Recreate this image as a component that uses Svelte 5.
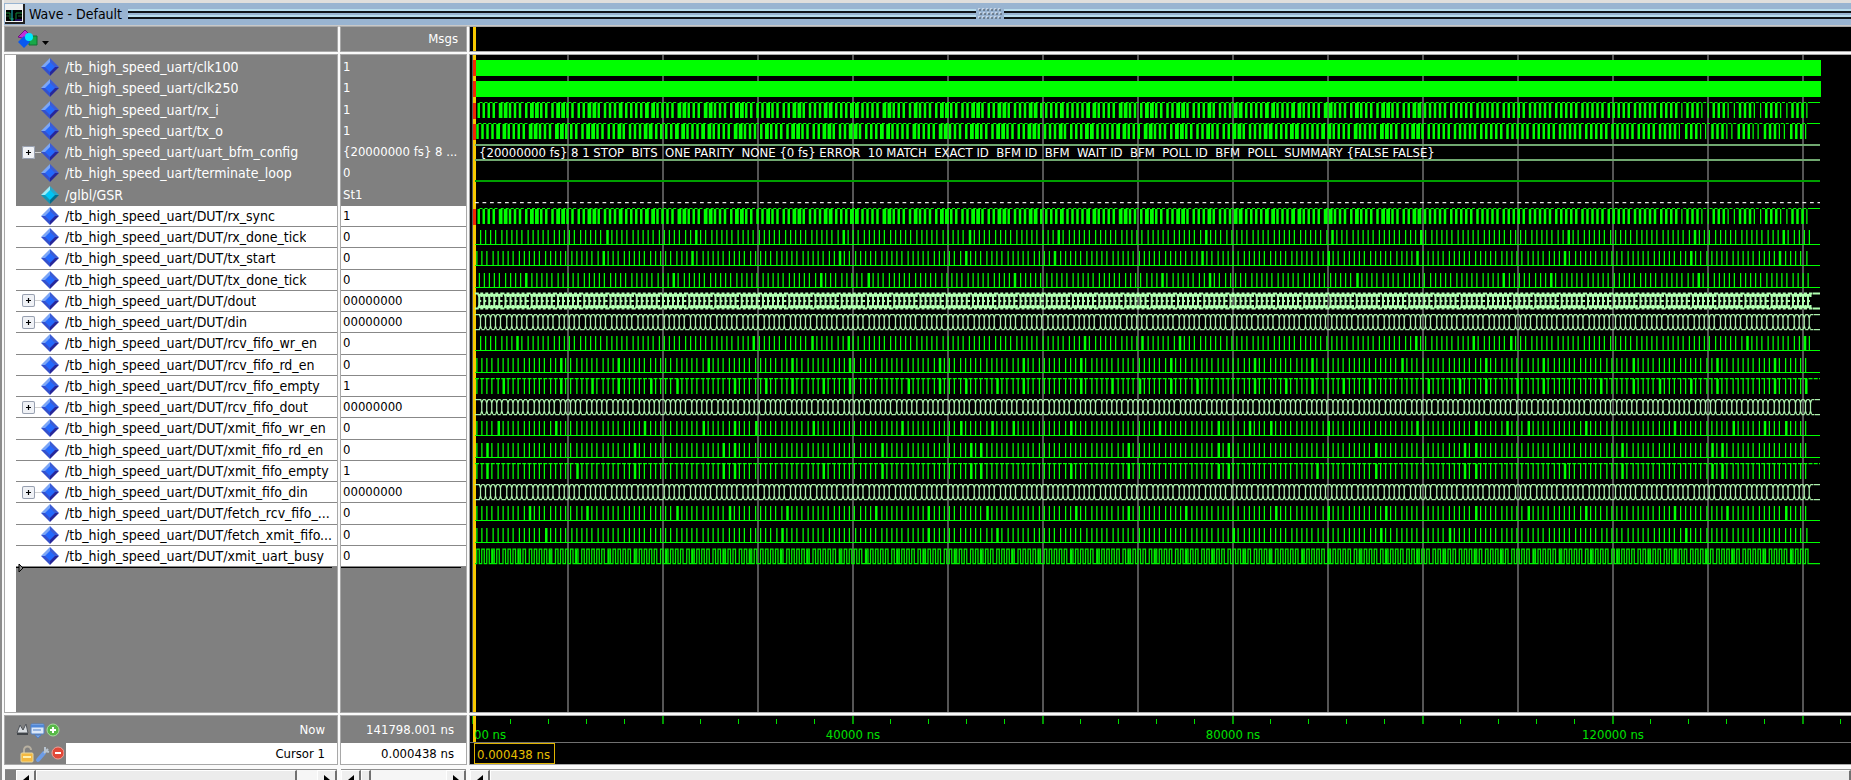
<script lang="ts">
  type Kind = "clock" | "serial" | "record" | "low" | "dashed" | "pulse" | "inverted" | "bus" | "dense" | "busy";

  interface Signal {
    name: string;
    value: string;
    kind: Kind;
    selected?: boolean;
    expandable?: boolean;
    net?: boolean;
    start?: number;
    wide?: number[];
  }

  const tb = "/tb_high_speed_uart/";
  const dut = tb + "DUT/";

  // wide: steps between the pulses that are drawn two units wide
  const signals: Signal[] = [
    { name: tb + "clk100", value: "1", kind: "clock", selected: true },
    { name: tb + "clk250", value: "1", kind: "clock", selected: true },
    { name: tb + "rx_i", value: "1", kind: "serial", selected: true, start: 6.3 },
    { name: tb + "tx_o", value: "1", kind: "serial", selected: true, start: 5.1 },
    { name: tb + "uart_bfm_config", value: "{20000000 fs} 8 ...", kind: "record", selected: true, expandable: true },
    { name: tb + "terminate_loop", value: "0", kind: "low", selected: true },
    { name: "/glbl/GSR", value: "St1", kind: "dashed", selected: true, net: true },
    { name: dut + "rx_sync", value: "1", kind: "serial", start: 6.3 },
    { name: dut + "rx_done_tick", value: "0", kind: "pulse", start: 8.2, wide: [24, 17, 28] },
    { name: dut + "tx_start", value: "0", kind: "pulse", start: 5.4, wide: [24, 17, 28] },
    { name: dut + "tx_done_tick", value: "0", kind: "pulse", start: 7.1, wide: [9, 28, 28] },
    { name: dut + "dout", value: "00000000", kind: "dense", expandable: true, start: 7 },
    { name: dut + "din", value: "00000000", kind: "bus", expandable: true, start: 8 },
    { name: dut + "rcv_fifo_wr_en", value: "0", kind: "pulse", start: 8.2, wide: [7, 45, 11] },
    { name: dut + "rcv_fifo_rd_en", value: "0", kind: "pulse", start: 5.3, wide: [16, 11, 17] },
    { name: dut + "rcv_fifo_empty", value: "1", kind: "inverted", start: 5.3, wide: [5, 11, 6, 5, 6] },
    { name: dut + "rcv_fifo_dout", value: "00000000", kind: "bus", expandable: true, start: 9 },
    { name: dut + "xmit_fifo_wr_en", value: "0", kind: "pulse", start: 5.3, wide: [4, 11, 17, 11, 6] },
    { name: dut + "xmit_fifo_rd_en", value: "0", kind: "pulse", start: 5.3, wide: [2, 28, 17] },
    { name: dut + "xmit_fifo_empty", value: "1", kind: "inverted", start: 5.3, wide: [2, 17, 11, 17] },
    { name: dut + "xmit_fifo_din", value: "00000000", kind: "bus", expandable: true, start: 8 },
    { name: dut + "fetch_rcv_fifo_...", value: "0", kind: "pulse", start: 5.3, wide: [10, 11, 17] },
    { name: dut + "fetch_xmit_fifo...", value: "0", kind: "pulse", start: 5.4, wide: [13, 45, 28] },
    { name: dut + "xmit_uart_busy", value: "0", kind: "busy", start: 5 },
  ];

  const record =
    "{20000000 fs} 8 1 STOP  BITS  ONE PARITY  NONE {0 fs} ERROR  10 MATCH  EXACT ID  BFM ID  BFM  WAIT ID  BFM  POLL ID  BFM  POLL  SUMMARY {FALSE FALSE}";

  const unit = 1.25;
  const period = 4.204;
  const count = 254;
  const origin = 5;
  const end = 1350;

  const labels = [40000, 80000, 120000].map((time) => ({ time, x: 3 + (time / 40000) * 380 }));
  const ticks = Array.from({ length: 50 }, (_, k) => ({ x: 2 + k * 38, major: k % 5 === 0 }));

  const px = (units: number) => Math.floor(units) * unit;

  function wideSet(gaps: number[] = []) {
    const set = new Set<number>();
    for (let k = gaps[0], i = 0; k < count; i++, k += gaps[i % gaps.length]) set.add(k);
    return set;
  }

  function box(x: number, y: number, w: number, h: number) {
    return `M${x} ${y}h${w}v${h}h${-w}z`;
  }

  function bars(s: Signal) {
    const wide = wideSet(s.wide);
    let d = "";
    for (let k = 0; k < count; k++) {
      const x = px(s.start! + k * period);
      if (s.kind === "serial") {
        const phase = (k / 5.6) % 1;
        let w = phase > 0.65 && k < 180 ? 3 : 2;
        if (k > 228 && k % 5 > 2) w = 1;
        d += box(x, 3, w * unit, 15) + box(x + 2, 2, 3, 1);
      } else {
        d += box(x, 3, (wide.has(k) ? 2 : 1) * unit, 15);
      }
    }
    if (s.kind === "serial") d += box(1338, 2, end - 1338, 1);
    if (s.kind === "pulse") d += box(origin, 17, end - origin, 1);
    return d;
  }

  function bus(s: Signal) {
    let d = `M${origin} 2.5H${s.start! * unit}M${origin} 17.5H${s.start! * unit}`;
    for (let k = 0; k < count; k++) {
      const x = px(s.start! + k * period) + 0.5;
      const n = px(s.start! + (k + 1) * period) + 0.5;
      d += `M${x - 1} 3L${x} 6V14L${x - 1} 17M${x + 1} 3L${x} 6M${x} 14L${x + 1} 17`;
      d += `M${x + 1} 2.5H${n - 1}M${x + 1} 17.5H${n - 1}`;
      if (s.kind === "dense") {
        const m = x + 2.5;
        d += `M${m} 3V6M${m} 14V17M${x} 10H${n - 3}`;
      }
    }
    const last = px(s.start! + count * period);
    return d + `M${last} 2.5H${end}M${last} 17.5H${end}`;
  }

  function busy(s: Signal) {
    let d = `M${origin} 17.5`;
    for (let k = 0; k < count; k++) {
      const x = px(s.start! + k * period) + 0.5;
      d += `H${x}V3H${x + 2.5}V17.5`;
      if (k % 11 === 3 || k % 11 === 8) d += `M${x + 1} 4V17.5`;
    }
    return d + `H${end}`;
  }
</script>

{#snippet diamond(net: boolean)}
  <svg class="diamond" viewBox="0 0 18 18">
    <path d="M9 0L0 9H9z" fill={net ? "#9cecf8" : "#7ca6f6"} />
    <path d="M9 0L18 9H9z" fill={net ? "#2aa6c8" : "#3c5cd4"} />
    <path d="M0 9L9 18V9z" fill={net ? "#1295b4" : "#3450cc"} />
    <path d="M18 9L9 18V9z" fill={net ? "#046c8c" : "#26269a"} />
    <path d="M9 4L14 9L9 14L4 9z" fill={net ? "#00c4f4" : "#2468fc"} />
  </svg>
{/snippet}

{#snippet arrow(left: boolean)}
  <button class="step" aria-label={left ? "Scroll left" : "Scroll right"}>
    <svg viewBox="0 0 6 10"><path d={left ? "M6 0V10L0 5z" : "M0 0V10L6 5z"} /></svg>
  </button>
{/snippet}

<div class="window">
  <header class="title">
    <svg class="app-icon" viewBox="0 0 20 20">
      <rect width="20" height="20" fill="#202020" />
      <rect width="18" height="18" fill="#f2f2f2" />
      <rect x="1" y="6" width="16" height="11" fill="#000" />
      <path d="M1 9h4v6h4M11 15v-6h6" fill="none" stroke="#108838" />
      <path d="M1 12h3M13 12h4" stroke="#1c5c30" />
      <path d="M7 6v11" stroke="#20c4d0" />
      <path d="M10 16h7" stroke="#4020b0" />
    </svg>
    <h1>Wave - Default</h1>
    <span class="groove"></span>
    <svg class="grip" viewBox="0 0 24 12">
      {#each [0, 1, 2, 3, 4, 5] as i}
        <path d="M{i * 4} 1h2M{i * 4 + 1} 5h2M{i * 4} 9h2" stroke="#eef4fa" stroke-width="1" />
        <path d="M{i * 4 + 1} 2h2M{i * 4 + 2} 6h2M{i * 4 + 1} 10h2" stroke="#3c444c" stroke-width="1" />
      {/each}
    </svg>
    <span class="groove"></span>
  </header>

  <main>
    <div class="head filter">
      <button class="menu" aria-label="Object filter">
        <svg viewBox="0 0 34 20">
          <path d="M1 8L8 1L13 6L9 10z" fill="#c030d8" stroke="#701080" />
          <path d="M12 7H20V16H12z" fill="#18a848" stroke="#107030" />
          <path d="M7 7L13 13L7 19L1 13z" fill="#0858f0" />
          <circle cx="12" cy="8" r="4" fill="#00e8ff" />
          <path d="M25 12H32L28.500 16z" fill="#000" />
        </svg>
      </button>
    </div>
    <div class="head msgs">Msgs</div>
    <div class="head black"><span class="cursor"></span></div>

    <div class="pane names">
      <ul class="rows">
        {#each signals as s}
          <li class:selected={s.selected}>
            <span class="tree">
              {#if s.expandable}
                <button class="expand" aria-label="Expand {s.name}">
                  <svg viewBox="0 0 13 13"><path d="M4 6.500H9M6.500 4V9" stroke="#000" stroke-width="1.200" /></svg>
                </button>
              {/if}
            </span>
            {@render diamond(!!s.net)}
            <span class="name">{s.name}</span>
          </li>
        {/each}
      </ul>
      <div class="insert">
        <svg viewBox="0 0 6 10"><path d="M1 1V9L5 5z" fill="#888" stroke="#000" /></svg>
      </div>
    </div>

    <div class="pane values">
      <ul class="rows">
        {#each signals as s}
          <li class:selected={s.selected}><span class="name">{s.value}</span></li>
        {/each}
      </ul>
      <div class="insert"></div>
    </div>

    <div class="pane waves">
      <span class="cursor"></span>
      <ul class="rows">
        {#each signals as s}
          <li>
            <svg class="trace">
              {#if s.kind === "clock"}
                <rect x="6" y="3" width="1345" height="16" fill="#0f0" />
              {:else if s.kind === "serial" || s.kind === "pulse"}
                <path d={bars(s)} fill="#0f0" />
              {:else if s.kind === "inverted"}
                <path d={bars(s)} fill="#0f0" />
                <path d="M{origin} 2.500H{end}" stroke="#0f0" stroke-width="1.250" stroke-dasharray="4 1.250" />
              {:else if s.kind === "low"}
                <path d="M{origin} 18H{end}" stroke="#00a000" stroke-width="2" />
              {:else if s.kind === "dashed"}
                <path d="M{origin} 17.500H{end}" stroke="#e8e8e8" stroke-width="1.250" stroke-dasharray="3.750 3.750" />
              {:else if s.kind === "record"}
                <path d="M{origin} 3H{end}M{origin} 18H{end}" stroke="#70a870" stroke-width="2" />
              {:else if s.kind === "bus"}
                <path d={bus(s)} stroke="#acf0ac" stroke-width="1.250" fill="none" />
              {:else if s.kind === "dense"}
                <path d={bus(s)} stroke="#b0ffb0" stroke-width="2" fill="none" />
              {:else}
                <path d={busy(s)} stroke="#00f000" stroke-width="1.250" fill="none" />
              {/if}
              {#if s.kind === "clock" || s.kind === "serial"}
                <rect x="3" y="3" width="3" height="16" fill="#f02800" />
              {/if}
            </svg>
            {#if s.kind === "record"}
              <span class="record">{record}</span>
            {/if}
          </li>
        {/each}
      </ul>
    </div>

    <div class="foot tools">
      <div class="line">
        <svg viewBox="0 0 44 16">
          <path d="M1 11L4 3L7 8L10 2L12 11z" fill="#d8dce0" stroke="#50545a" />
          <rect x="1" y="11" width="11" height="2" fill="#404448" />
          <rect x="15" y="2" width="13" height="10" rx="1" fill="#dce8f8" stroke="#5080c8" />
          <path d="M15 4h13" stroke="#5088d8" stroke-width="3" />
          <path d="M17 8h8M19 13l3 3l3-3z" stroke="#5080c8" fill="#80a8e0" />
          <circle cx="37" cy="8" r="6" fill="#58b848" stroke="#a8dca0" />
          <path d="M34 8h6M37 5v6" stroke="#fff" stroke-width="2" />
        </svg>
        <span>Now</span>
      </div>
      <div class="line light">
        <span class="icons">
          <svg viewBox="0 0 46 18">
            <path d="M6 9V5a3.500 3.500 0 0 1 7 0" fill="none" stroke="#b8b0a0" stroke-width="2" />
            <rect x="3" y="8" width="12" height="9" rx="1" fill="#f4b840" stroke="#e8d8a0" />
            <path d="M5 12h8" stroke="#fff0b0" stroke-width="2" />
            <path d="M20 15L26 8" stroke="#6c9ce8" stroke-width="4" stroke-linecap="round" />
            <path d="M26 8L30 4M27 2v4l4 1" stroke="#b8c4d0" stroke-width="2" fill="none" />
            <circle cx="40" cy="8" r="6" fill="#e04838" stroke="#f0a098" />
            <path d="M37 8h6" stroke="#fff" stroke-width="2" />
          </svg>
        </span>
        <span>Cursor 1</span>
      </div>
    </div>
    <div class="foot times">
      <div class="line">141798.001 ns</div>
      <div class="line light">0.000438 ns</div>
    </div>
    <div class="foot timeline">
      <div class="scale">
        <svg class="ticks">
          {#each ticks as t}
            <rect x={t.x} y={t.major ? 0 : 3} width={t.major ? 2 : 1} height={t.major ? 8 : 5} fill={t.major ? "#009a00" : "#00e000"} />
          {/each}
        </svg>
        <span class="cursor"></span>
        <span class="first">00 ns</span>
        {#each labels as l}
          <span class="label" style="left: {l.x}px">{l.time} ns</span>
        {/each}
      </div>
      <div class="cursor-row"><output>0.000438 ns</output></div>
    </div>

    <div class="scroll indent">
      {@render arrow(true)}
      <span class="thumb long"></span>
      <span class="track"></span>
      {@render arrow(false)}
    </div>
    <div class="scroll">
      {@render arrow(true)}
      <span class="thumb small"></span>
      <span class="track"></span>
      {@render arrow(false)}
    </div>
    <div class="scroll">
      {@render arrow(true)}
      <span class="thumb full"></span>
    </div>
  </main>
</div>

<style>
  :global(body) {
    margin: 0;
    background: #f0f0f0;
  }
  .window {
    display: flex;
    flex-direction: column;
    box-sizing: border-box;
    height: 100vh;
    min-height: 700px;
    overflow: hidden;
    border-left: 2px solid #8c8c8c;
    background: #f0f0f0;
    font: 13px/16px "DejaVu Sans Condensed", "Noto Sans", sans-serif;
    color: #000;
  }
  .title {
    display: flex;
    align-items: center;
    flex: none;
    box-sizing: border-box;
    height: 27px;
    margin-left: 2px;
    padding-left: 1px;
    border-top: 3px solid #e0dedc;
    border-bottom: 2px solid #c8c8c8;
    background: #99b4d1;
  }
  .app-icon {
    width: 20px;
    height: 20px;
  }
  h1 {
    margin: 0 6px 0 4px;
    font-size: 14px;
    font-weight: normal;
    white-space: nowrap;
  }
  .groove {
    flex: 1;
    height: 10px;
    background: linear-gradient(
      #b8dcec 0 2px, #101418 2px 4px, #99b4d1 4px 6px, #b8dcec 6px 8px, #101418 8px 10px
    );
  }
  .grip {
    width: 24px;
    height: 12px;
    margin: 0 2px;
  }
  main {
    display: grid;
    grid-template-columns: 332px 125px minmax(0, 1fr);
    grid-template-rows: 24px minmax(0, 1fr) 48px 12px;
    gap: 4px;
    flex: 1;
    min-height: 0;
    padding-left: 3px;
    background: #fafafa;
  }
  ul {
    margin: 0;
    padding: 0;
    list-style: none;
  }
  button {
    padding: 0;
    border: 0;
    background: none;
  }
  .head,
  .foot,
  .pane {
    position: relative;
    box-shadow: 0 0 0 1px #a8a8a8;
    background: #808080;
  }
  .head {
    display: flex;
    align-items: center;
  }
  .menu {
    width: 34px;
    height: 20px;
    margin-left: 12px;
  }
  .menu svg,
  .diamond,
  .expand svg {
    display: block;
  }
  .msgs {
    justify-content: flex-end;
    padding-right: 8px;
    color: #fff;
  }
  .head.black,
  .timeline {
    background: #000;
  }
  .cursor {
    position: absolute;
    top: 0;
    bottom: 0;
    left: 3px;
    width: 3px;
    background: #f8c800;
  }
  .pane {
    padding-top: 2px;
    overflow: hidden;
  }
  .names {
    border-left: 11px solid #fff;
    font-size: 14px;
  }
  .rows {
    display: grid;
    grid-template-rows: repeat(24, 1fr);
    height: 510px;
  }
  .names li,
  .values li {
    display: flex;
    align-items: center;
    min-width: 0;
    min-height: 0;
    box-sizing: border-box;
    border-bottom: 1px solid #888;
    background: #fff;
  }
  .names li.selected,
  .values li.selected {
    border-color: #808080;
    background: #808080;
    color: #fff;
  }
  .values li {
    padding-left: 2px;
  }
  .name {
    overflow: hidden;
    text-overflow: ellipsis;
    white-space: nowrap;
  }
  .names .name {
    margin-left: 6px;
  }
  .tree {
    display: flex;
    align-items: center;
    flex: none;
    width: 25px;
  }
  .tree:has(.expand)::after {
    content: "";
    flex: 1;
    height: 1px;
    background: #d0d0d0;
  }
  .expand {
    width: 13px;
    height: 13px;
    margin-left: 6px;
    border-radius: 2px;
    background: #f0f2f6;
    box-shadow: 0 0 0 1px #98a0b0 inset;
  }
  .diamond {
    flex: none;
    width: 18px;
    height: 18px;
  }
  .insert {
    display: flex;
    align-items: center;
    height: 1px;
    margin-right: 5px;
    background: #000;
  }
  .insert svg {
    width: 6px;
    height: 10px;
    margin-left: 2px;
  }
  .waves {
    background: repeating-linear-gradient(90deg, #555 0 2px, #000 2px 95px) 2px 0 #000;
  }
  .waves li {
    display: grid;
    align-items: start;
    position: relative;
    min-width: 0;
    min-height: 0;
  }
  .trace {
    width: 100%;
    height: 20px;
    grid-area: 1 / 1;
    overflow: hidden;
  }
  .record {
    grid-area: 1 / 1;
    padding: 3px 0 0 9px;
    color: #fff;
    white-space: pre;
  }
  .line {
    display: flex;
    align-items: center;
    justify-content: space-between;
    height: 27px;
    padding-right: 12px;
    color: #fff;
  }
  .line.light {
    height: 21px;
    background: #fff;
    color: #000;
  }
  .times .line {
    justify-content: flex-end;
  }
  .tools svg {
    width: 44px;
    height: 16px;
    margin-left: 11px;
  }
  .tools .icons {
    display: flex;
    align-items: center;
    align-self: stretch;
    width: 61px;
    background: #808080;
  }
  .tools .icons svg {
    width: 46px;
    height: 18px;
    margin-left: 13px;
  }
  .timeline {
    overflow: hidden;
    color: #00e000;
  }
  .scale {
    position: relative;
    height: 27px;
    border-bottom: 1px solid #707070;
    box-sizing: border-box;
  }
  .ticks {
    display: block;
    width: 100%;
    height: 10px;
  }
  .first,
  .label {
    position: absolute;
    top: 11px;
    white-space: nowrap;
  }
  .first {
    left: 4px;
  }
  .label {
    transform: translateX(-50%);
  }
  .cursor-row {
    display: flex;
    height: 21px;
    padding-left: 4px;
  }
  output {
    box-sizing: border-box;
    padding: 3px 4px 0 2px;
    border: 1px solid #e0b400;
    color: #e8c000;
    white-space: nowrap;
  }
  .scroll {
    display: flex;
    align-items: flex-start;
    height: 10px;
    margin-top: 2px;
    overflow: hidden;
    background: #f6f6f6;
    box-shadow: 0 -1px 0 #909090;
  }
  .indent {
    border-left: 11px solid #808080;
  }
  .step {
    flex: none;
    box-sizing: border-box;
    width: 20px;
    height: 21px;
    border: 1px solid #fff;
    border-right: 2px solid #707070;
    background: #f0f0f0;
  }
  .step svg {
    width: 6px;
    height: 10px;
  }
  .thumb {
    flex: none;
    box-sizing: border-box;
    height: 21px;
    border: 1px solid #fff;
    border-right: 2px solid #707070;
    background: #ececec;
  }
  .thumb.long {
    width: 261px;
  }
  .thumb.small {
    width: 10px;
  }
  .thumb.full,
  .track {
    flex: 1;
  }
</style>
